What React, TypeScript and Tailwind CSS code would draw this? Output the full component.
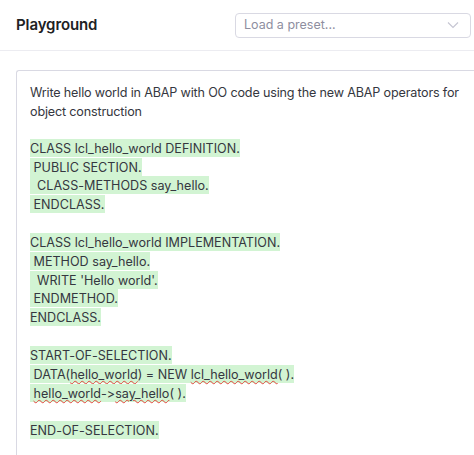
const PROMPT =
  "Write hello world in ABAP with OO code using the new ABAP operators for object construction";

type Part = string | { err: string };

const CODE: Part[][] = [
  ["CLASS lcl_hello_world DEFINITION."],
  ["\u00a0PUBLIC SECTION."],
  ["\u00a0\u00a0CLASS-METHODS say_hello."],
  ["\u00a0ENDCLASS."],
  [],
  ["CLASS lcl_hello_world IMPLEMENTATION."],
  ["\u00a0METHOD say_hello."],
  ["\u00a0\u00a0WRITE 'Hello world'."],
  ["\u00a0ENDMETHOD."],
  ["ENDCLASS."],
  [],
  ["START-OF-SELECTION."],
  ["\u00a0DATA(", { err: "hello_world" }, ") = NEW ", { err: "lcl_hello_world" }, "( )."],
  ["\u00a0", { err: "hello_world" }, "->", { err: "say_hello" }, "( )."],
  [],
  ["END-OF-SELECTION."],
];

function CodeLine({ parts }: { parts: Part[] }) {
  if (parts.length === 0) return <div className="h-[18.85px]" />;
  return (
    <div className="h-[18.85px] whitespace-pre">
      <span className="bg-[#d2f4d3] py-[1.5px]">
        {parts.map((p, i) =>
          typeof p === "string" ? (
            <span key={i}>{p}</span>
          ) : (
            <span
              key={i}
              className="underline decoration-wavy decoration-[#e0443a] decoration-1 underline-offset-2"
            >
              {p.err}
            </span>
          )
        )}
      </span>
    </div>
  );
}

export default function App() {
  return (
    <div
      className="w-[474px] h-[455px] overflow-hidden bg-white text-[#353740] [font-feature-settings:'calt'_0,'liga'_0]"
      style={{ fontFamily: "Inter, 'Liberation Sans', sans-serif" }}
    >
      <header className="flex items-center justify-between h-[51px] border-b border-[#ececf1] pl-4 pr-[3px]">
        <h1 className="text-[15px] font-semibold text-[#202123] tracking-[-0.1px]">Playground</h1>
        <div className="flex items-center justify-between w-[236px] h-[25px] border border-[#d9d9e3] rounded-[4px] px-2">
          <span className="text-[12.5px] text-[#8e8ea0]">Load a preset...</span>
          <svg width="12" height="8" viewBox="0 0 12 8" fill="none" className="mr-[3px]">
            <path d="M1 1.5l5 5 5-5" stroke="#c5c5d2" strokeWidth="1.1" />
          </svg>
        </div>
      </header>

      <div className="pl-4 pt-[19px] w-[520px]">
        <div className="border-l border-t border-[#d9d9e3] rounded-tl-[3px] pl-[13px] pt-[13px] h-[400px] text-[12.6px] leading-[18.85px]">
          <p className="w-[440px] tracking-[-0.17px]">{PROMPT}</p>
          <div className="h-[17.5px]" />
          {CODE.map((parts, i) => (
            <CodeLine key={i} parts={parts} />
          ))}
        </div>
      </div>
    </div>
  );
}
